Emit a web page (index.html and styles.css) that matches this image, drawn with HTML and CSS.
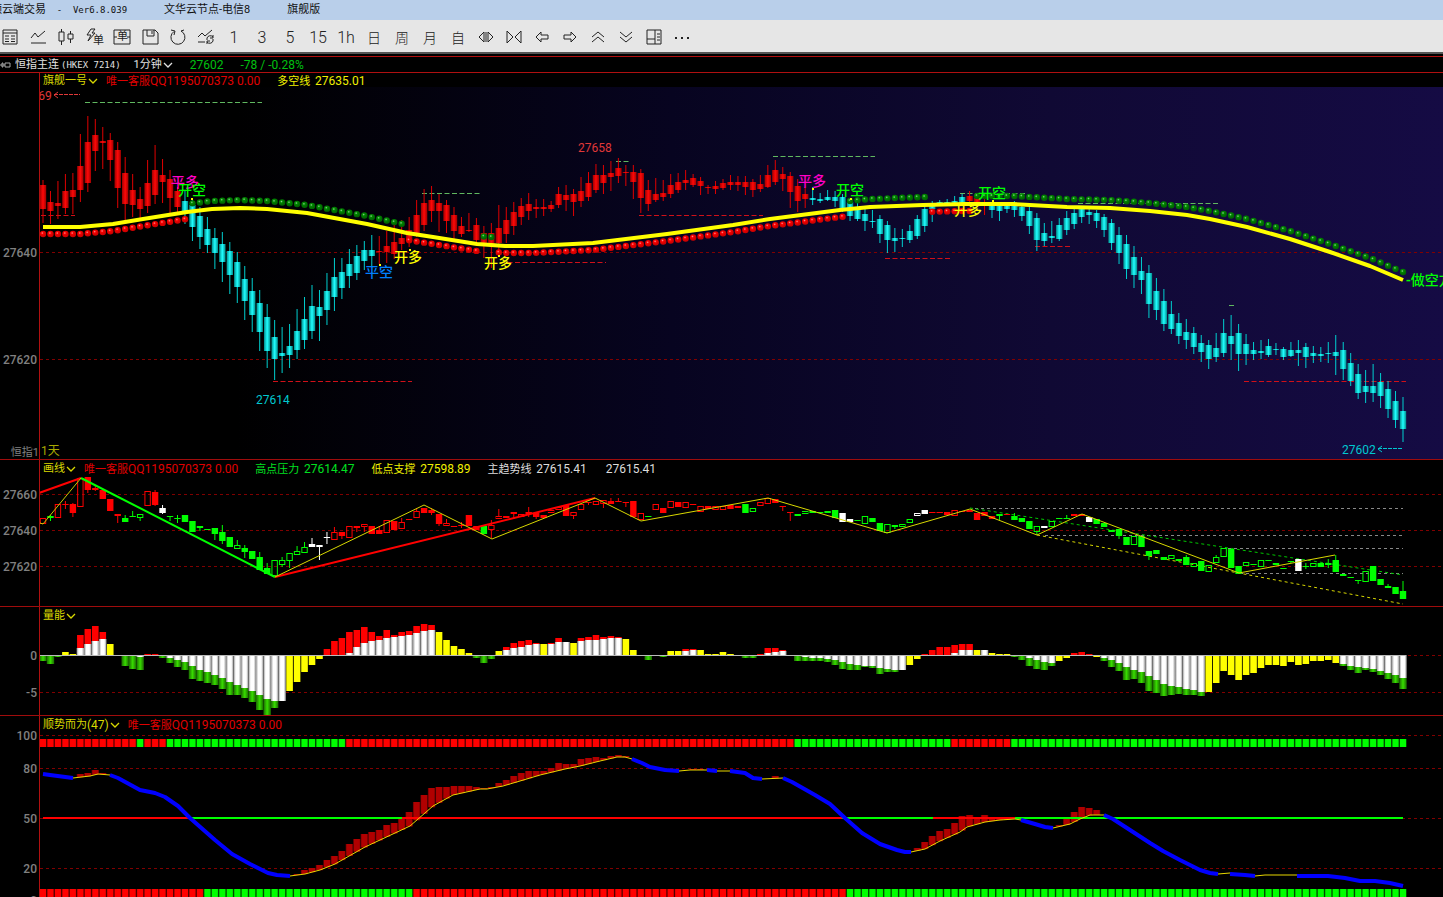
FILE: index.html
```
<!DOCTYPE html>
<html lang="zh-CN">

<head>
  <meta charset="UTF-8">
  <title>领云端交易</title>
  <link rel="stylesheet" href="styles.css">
</head>

<body>
  <header class="titlebar">
    <span class="app">领云端交易 <i>-</i> <i>Ver6.8.039</i></span>
    <span class="node">文华云节点-电信8</span>
    <span>旗舰版</span>
  </header>

  <nav class="toolbar">
    <button aria-label="报价"><svg viewBox="0 0 18 18"><path d="M2 2h14v14H2zM2 5h14M4 8h4M10 8h4M4 11h4M10 11h4M4 13.5h4M10 13.5h4"/></svg></button>
    <button aria-label="分时"><svg viewBox="0 0 18 18"><path d="M2 10l4-5 3 4 7-6M2 15h15"/></svg></button>
    <button aria-label="K线"><svg viewBox="0 0 18 18"><path d="M2 4h5v9H2zM4.500 1v3M4.500 13v4M11 6h5v5h-5zM13.500 3v3M13.500 11v4"/></svg></button>
    <button aria-label="闪电下单"><svg viewBox="0 0 18 18"><path d="M6 1L2 7h4l-3 6M6 1h4L7 5h3L3 13"/></svg><span class="sub">单</span></button>
    <button aria-label="下单"><svg viewBox="0 0 18 18"><path d="M1 2h16v14H1zM1 9h3M14 9h3"/></svg><span class="mid">单</span></button>
    <button aria-label="保存"><svg viewBox="0 0 18 18"><path d="M2 2h12l3 3v11H2zM6 2v6h7V2M11 3v3"/></svg></button>
    <button aria-label="刷新"><svg viewBox="0 0 18 18"><path d="M5 3.500a7 7 0 1 0 7-.5M2 2l4 1-1 4M12 3l3-1"/></svg></button>
    <button aria-label="切换"><svg viewBox="0 0 18 18"><path d="M1 9l4-4 3 3 7-6M1 14h7M16 9a3.500 3.500 0 0 0-6 1v2M10 14a3.500 3.500 0 0 0 6-1v-2M16 7v3h-3M10 16v-3h3"/></svg></button>
    <button>1</button>
    <button>3</button>
    <button>5</button>
    <button>15</button>
    <button>1h</button>
    <button class="zh">日</button>
    <button class="zh">周</button>
    <button class="zh">月</button>
    <button class="zh">自</button>
    <button aria-label="放大"><svg viewBox="0 0 18 18"><path d="M7 4L2 9l5 5zM11 4l5 5-5 5zM9 4v10"/></svg></button>
    <button aria-label="缩小"><svg viewBox="0 0 18 18"><path d="M2 3v12l6-6zM16 3v12l-6-6z"/></svg></button>
    <button aria-label="左移"><svg viewBox="0 0 18 18"><path d="M3 9l5-5v3h7v4H8v3z"/></svg></button>
    <button aria-label="右移"><svg viewBox="0 0 18 18"><path d="M15 9l-5-5v3H3v4h7v3z"/></svg></button>
    <button aria-label="上翻"><svg viewBox="0 0 18 18"><path d="M3 9l6-5 6 5M3 14l6-5 6 5"/></svg></button>
    <button aria-label="下翻"><svg viewBox="0 0 18 18"><path d="M3 4l6 5 6-5M3 9l6 5 6-5"/></svg></button>
    <button aria-label="布局"><svg viewBox="0 0 18 18"><path d="M2 2h14v14H2zM10 2v14M2 11h8M12 6h3M12 9h3M12 12h3"/></svg></button>
    <button aria-label="更多"><svg viewBox="0 0 18 18"><path class="dots" d="M2 10h2M8 10h2M14 10h2"/></svg></button>
  </nav>

  <section class="quote">
    <svg class="link" viewBox="0 0 11 8"><path d="M0 4h2M2 2h1v4H2zM3 4h2M5 2h5v4H5z"/></svg>
    <span class="contract">恒指主连<i>(HKEX 7214)</i></span>
    <button class="period">1分钟<svg viewBox="0 0 10 6"><path d="M1 1l4 4 4-4"/></svg></button>
    <b class="last">27602</b>
    <b>-78 / -0.28%</b>
  </section>

  <section class="panel price">
    <svg class="axis" id="price-axis"></svg>
    <div class="plot">
      <div class="legend">
        <button>旗舰一号<svg viewBox="0 0 10 6"><path d="M1 1l4 4 4-4"/></svg></button>
        <span class="red">唯一客服<b>QQ1195070373 0.00</b></span>
        <span class="yellow">多空线 <b>27635.01</b></span>
      </div>
      <svg class="chart" id="price"></svg>
    </div>
  </section>

  <section class="panel trend">
    <svg class="axis" id="trend-axis"></svg>
    <div class="plot">
      <div class="legend">
        <button>画线<svg viewBox="0 0 10 6"><path d="M1 1l4 4 4-4"/></svg></button>
        <span class="red">唯一客服<b>QQ1195070373 0.00</b></span>
        <span class="green">高点压力 <b>27614.47</b></span>
        <span class="yellow">低点支撑 <b>27598.89</b></span>
        <span class="white">主趋势线 <b>27615.41</b></span>
        <span class="white"><b>27615.41</b></span>
      </div>
      <svg class="chart" id="trend"></svg>
    </div>
  </section>

  <section class="panel energy">
    <svg class="axis" id="energy-axis"></svg>
    <div class="plot">
      <div class="legend">
        <button>量能<svg viewBox="0 0 10 6"><path d="M1 1l4 4 4-4"/></svg></button>
      </div>
      <svg class="chart" id="energy"></svg>
    </div>
  </section>

  <section class="panel follow">
    <svg class="axis" id="follow-axis"></svg>
    <div class="plot">
      <div class="legend">
        <button>顺势而为<b>(47)</b><svg viewBox="0 0 10 6"><path d="M1 1l4 4 4-4"/></svg></button>
        <span class="red">唯一客服<b>QQ1195070373 0.00</b></span>
      </div>
      <svg class="chart" id="follow"></svg>
    </div>
  </section>

  <svg class="defs">
    <defs>
      <linearGradient id="up"><stop offset="0" stop-color="#a00000"/><stop offset=".5" stop-color="#ff0808"/><stop offset="1" stop-color="#a00000"/></linearGradient>
      <linearGradient id="down"><stop offset="0" stop-color="#008c8c"/><stop offset=".5" stop-color="#20ffff"/><stop offset="1" stop-color="#008c8c"/></linearGradient>
      <linearGradient id="leaf"><stop offset="0" stop-color="#1a6a00"/><stop offset=".5" stop-color="#38dd00"/><stop offset="1" stop-color="#1a6a00"/></linearGradient>
      <linearGradient id="silver"><stop offset="0" stop-color="#999"/><stop offset=".3" stop-color="#fff"/><stop offset=".7" stop-color="#fff"/><stop offset="1" stop-color="#999"/></linearGradient>
      <radialGradient id="redball" cx=".4" cy=".35"><stop offset="0" stop-color="#ff9090"/><stop offset=".4" stop-color="#f80000"/><stop offset="1" stop-color="#d00000"/></radialGradient>
      <radialGradient id="greenball" cx=".4" cy=".35"><stop offset="0" stop-color="#90d090"/><stop offset=".4" stop-color="#008800"/><stop offset="1" stop-color="#006800"/></radialGradient>
    </defs>
  </svg>
  <script src="chart.js"></script>
</body>

</html>
```
FILE: styles.css
```
* {
  box-sizing: border-box;
}

body {
  margin: 0;
  background: #000;
  font-family: Roboto, "Noto Sans CJK SC", sans-serif;
  font-size: 11px;
  line-height: 14px;
  overflow: hidden;
}

button {
  padding: 0;
  border: 0;
  background: none;
  color: inherit;
  font: inherit;
}

svg {
  display: block;
  fill: none;
}

i {
  font-family: "DejaVu Sans Mono", monospace;
  font-size: 9px;
  font-style: normal;
}

b {
  font-size: 12px;
  font-weight: 400;
}

.titlebar {
  display: flex;
  gap: 37px;
  height: 20px;
  padding-top: 3px;
  background: #b9cfea;
  color: #111;
  white-space: pre;
}

.titlebar i {
  margin-left: 4px;
}

.titlebar .app {
  margin-left: -9px;
  word-spacing: 4px;
}

.toolbar {
  display: flex;
  align-items: center;
  height: 34px;
  padding-top: 1px;
  background: #e6e6e6;
  border-bottom: 2px solid #555;
  overflow: hidden;
}

.toolbar button {
  position: relative;
  flex: none;
  width: 28px;
  height: 28px;
  color: #222;
  font-size: 16px;
  font-weight: 300;
  line-height: 30px;
}

.toolbar button:first-child {
  margin-left: -4px;
}

.toolbar .zh {
  font-size: 14px;
}

.toolbar svg {
  width: 18px;
  height: 18px;
  margin: 0 auto;
  stroke: #222;
}

.toolbar .dots {
  stroke-width: 2;
}

.toolbar span {
  position: absolute;
  font-size: 11px;
  font-weight: 400;
  line-height: 12px;
}

.toolbar .sub {
  right: 4px;
  bottom: 4px;
}

.toolbar .mid {
  left: 9px;
  top: 8px;
}

.quote {
  display: flex;
  align-items: center;
  height: 17px;
  margin-top: 2px;
  border-top: 1px solid #b01010;
  border-bottom: 1px solid #b01010;
  color: #e0e0e0;
  white-space: nowrap;
}

.quote .link {
  width: 11px;
  height: 8px;
  margin-right: 4px;
  stroke: #aaa;
}

.quote .period,
.legend button {
  display: flex;
  align-items: center;
}

.quote i {
  margin-left: 2px;
}

.quote .period {
  margin: 0 17px 0 13px;
}

.period svg,
.legend svg {
  width: 10px;
  height: 6px;
  margin-left: 1px;
  stroke: currentColor;
  stroke-width: 1.3;
}

.quote b {
  color: #00c010;
}

.quote .last {
  margin-right: 17px;
}

.panel {
  display: grid;
  grid-template-columns: 39px 1fr;
  align-items: end;
}

.panel + .panel {
  border-top: 1px solid #a00c0c;
}

.plot {
  min-width: 0;
  border-left: 1px solid #b01010;
}

.legend {
  display: flex;
  align-items: center;
  gap: 17px;
  height: 16px;
  padding: 2px 0 0 3px;
  white-space: nowrap;
}

.price .legend {
  height: 14px;
}

.legend button {
  margin-right: -9px;
  color: #d8d800;
}

.red {
  color: #e00000;
}

.yellow {
  color: #f0f000;
}

.green {
  color: #00e020;
}

.white {
  color: #ddd;
}

.yellow b,
.green b,
.white b {
  margin-left: 2px;
}

.axis {
  width: 39px;
  overflow: visible;
}

.chart {
  width: 100%;
}

.price svg.axis,
.price .chart {
  height: 372px;
}

.price .chart {
  background: linear-gradient(90deg, #000, #000 14%, #070420 45%, #100934 72%, #150b44);
}

.trend svg.axis,
.trend .chart {
  height: 130px;
}

.energy svg.axis,
.energy .chart {
  height: 92px;
}

.follow svg.axis,
.follow .chart {
  height: 165px;
}

.axis text {
  fill: #808080;
  font-size: 12px;
  font-weight: 500;
  text-anchor: end;
}

.axis .code {
  font-size: 11px;
  font-weight: 400;
}

.chart text {
  font-size: 12px;
}

.chart .signal {
  font-size: 14px;
  font-weight: 500;
}

.grid {
  stroke: #800000;
  stroke-dasharray: 3 3;
}

.level {
  stroke-dasharray: 5 2.5;
}

.defs {
  position: absolute;
  width: 0;
  height: 0;
}
```
FILE: chart.js
```
// 每根K线的间距
const STEP = 1360 / 182;
const cx = i => 43 + STEP * i;

function rect(x, y, w, h, fill, stroke) {
  return `<rect x="${x}" y="${y}" width="${w}" height="${h}" fill="${fill}"${stroke ? ` stroke="${stroke}"` : ''}/>`;
}

function line(x1, y1, x2, y2, color, width) {
  return `<line x1="${x1}" y1="${y1}" x2="${x2}" y2="${y2}" stroke="${color}" stroke-width="${width || 1}"/>`;
}

function level(x1, x2, y, color) {
  return `<line class="level" x1="${x1}" y1="${y}" x2="${x2}" y2="${y}" stroke="${color}"/>`;
}

function poly(points, color, width) {
  return `<polyline points="${points.join(' ')}" stroke="${color}" stroke-width="${width}" stroke-linejoin="round"/>`;
}

function text(x, y, s, color, cls) {
  return `<text x="${x}" y="${y}" fill="${color}"${cls ? ` class="${cls}"` : ''}>${s}</text>`;
}

function grid(ys) {
  return ys.map(y => `<line class="grid" x1="40" x2="200%" y1="${y}" y2="${y}"/>`).join('');
}

// top: 图表区域的上边
function draw(id, top, html, labels) {
  document.getElementById(id).innerHTML = `<g transform="translate(-40 ${-top})">${html}</g>`;
  document.getElementById(id + '-axis').innerHTML = labels
    .map(l => `<text x="37" y="${l[0] - top + 5}">${l[1]}</text>`).join('');
}

function valueAt(points, x) {
  let k = 1;
  while (k < points.length - 1 && points[k][0] < x) k++;
  const [a, b] = [points[k - 1], points[k]];
  return a[1] + (b[1] - a[1]) * (x - a[0]) / (b[0] - a[0]);
}

// ---------- 主图 ----------
// 高 低 实体上 实体下
const bars = `180 223 185 209,191 224 202 211,181 219 203 206,174 214 191 208,173 214 190 197,134 202 166 190,116 192 142 183,119 171 135 151,127 169 141 143,133 181 140 160,
142 208 150 188,157 220 173 204,174 217 190 205,187 219 199 209,160 213 183 206,145 204 170 195,159 203 175 182,170 214 179 198,187 212 191 207,191 224 201 211,
199 241 205 227,207 249 216 237,217 253 229 245,228 269 238 253,232 282 244 262,242 294 251 275,252 303 262 287,266 320 279 301,278 332 291 315,290 351 303 332,
304 368 317 351,320 380 337 359,327 373 353 356,324 368 346 355,309 359 331 350,297 349 319 340,285 339 306 331,290 341 307 316,273 325 291 310,258 311 277 297,
258 299 272 288,249 288 264 276,245 280 256 273,241 270 250 261,235 267 250 256,236 264 251 252,231 263 246 252,223 259 242 254,220 250 238 244,217 247 230 240,
200 237 215 233,189 231 203 225,186 222 200 211,194 232 203 211,200 233 205 221,207 240 215 231,217 237 226 234,213 232 230 231,218 245 225 240,226 258 233 245,
223 268 233 245,205 253 228 243,207 243 220 234,202 235 212 226,198 225 206 217,193 220 204 211,199 218 207 209,199 216 207 209,201 212 205 209,187 208 194 205,
185 211 195 200,189 216 194 202,177 207 191 201,172 201 183 197,164 193 175 190,165 194 175 183,161 191 173 177,158 183 168 176,165 186 172 173,165 199 172 182,
169 213 173 198,180 211 190 204,178 202 194 200,180 201 193 197,174 198 185 194,173 193 182 190,170 190 180 183,174 187 178 185,177 195 181 186,185 194 187 188,
181 194 186 189,179 190 183 188,175 190 182 185,176 191 182 185,176 195 182 187,179 197 182 190,175 192 184 189,165 188 175 187,160 185 170 182,167 191 174 179,
172 208 176 192,179 212 186 201,187 208 194 199,187 205 198 200,193 203 199 201,190 201 197 200,191 207 197 201,194 212 197 209,198 221 202 216,203 221 208 219,
209 231 214 221,210 228 221 222,215 243 219 234,221 253 225 240,228 252 238 241,229 247 238 239,225 243 231 240,215 239 219 236,207 232 209 226,201 222 204 209,
200 206 202 204,199 205 202 203,196 206 201 203,194 205 197 203,191 203 196 201,195 204 198 203,199 215 202 206,202 218 205 210,204 221 206 211,204 213 206 209,
201 217 206 210,204 221 207 216,207 234 211 226,213 251 218 240,223 246 233 241,221 243 236 238,218 241 225 239,211 235 218 230,209 229 213 224,206 223 209 217,
207 224 212 215,210 228 213 221,214 237 217 230,219 250 223 243,227 264 235 253,235 279 244 269,246 288 257 275,257 294 271 280,265 318 273 304,278 320 291 310,
289 331 301 324,301 334 314 329,313 344 323 336,319 349 332 340,327 354 333 347,335 362 343 352,340 369 345 359,333 362 348 357,319 357 333 353,315 360 336 344,
324 371 333 354,334 365 344 354,342 360 350 354,340 359 351 353,339 357 346 355,343 355 349 350,347 360 349 357,342 357 350 356,340 366 350 353,343 368 347 357,
346 363 353 356,347 362 354 356,342 363 353 354,335 375 352 356,342 380 350 369,353 386 363 381,364 399 374 393,370 403 386 392,364 402 386 393,373 408 382 396,
381 418 389 409,391 428 401 420,397 442 411 429`.split(',').map(s => s.trim().split(' ').map(Number));

const isUp = i => i < 19 || (i > 44 && i < 103) || (i > 123 && i < 127);

// 多空线
const ma = [[43, 227], [80, 227], [113, 224], [143, 219], [187, 212], [212, 209], [240, 208], [267, 209], [307, 213], [367, 224], [407, 233],
  [433, 237], [477, 244], [505, 246], [533, 246], [593, 243], [667, 234], [733, 225], [770, 219], [840, 210], [870, 207], [923, 205], [965, 204], [1013, 204], [1067, 207],
  [1110, 208], [1150, 211], [1187, 215], [1210, 219], [1247, 227], [1290, 239], [1330, 252], [1370, 266], [1403, 280]];

const greenBall = i => (i > 19 && i < 49) || i === 59 || i === 60 || (i > 107 && i < 119) || i > 124;

let out = grid([252.5, 359.5]);
[[85, 262, 103], [422, 480, 194], [616, 629, 162], [773, 875, 157], [960, 1025, 194], [1078, 1219, 204], [1229, 1234, 306]]
  .forEach(l => out += level(l[0], l[1], l[2] - .5, '#60b860'));
[[41, 75, 215], [273, 412, 381], [500, 606, 262], [639, 763, 215], [885, 950, 258], [1035, 1070, 246], [1244, 1406, 381]]
  .forEach(l => out += level(l[0], l[1], l[2] + .5, '#d01018'));

bars.forEach((b, i) => {
  const up = isUp(i);
  out += line(cx(i), b[0], cx(i), b[1], up ? '#e00000' : '#00d0d0');
  out += rect(cx(i) - 3.2, b[2], 6.4, Math.max(b[3] - b[2], 1), up ? 'url(#up)' : 'url(#down)');
});
out += poly(ma, '#ff0', 4);
bars.forEach((b, i) => {
  const g = greenBall(i);
  out += `<circle cx="${cx(i)}" cy="${valueAt(ma, cx(i)) + (g ? -8 : 7)}" r="3.2" fill="url(#${g ? 'greenball' : 'redball'})"/>`;
});

// 买卖信号
[[171, 187, '平多', '#ff00c8'], [178, 195, '开空', '#00ff00'], [365, 277, '平空', '#0080ff'], [394, 262, '开多', '#ffff00'],
  [484, 268, '开多', '#ffff00'], [798, 186, '平多', '#ff00c8'], [836, 195, '开空', '#00ff00'], [954, 215, '开多', '#ffff00'],
  [978, 198, '开空', '#00ff00'], [1406, 285, '-做空方', '#00ff00']]
  .forEach(s => out += text(s[0], s[1], s[2], s[3], 'signal'));

out += text(578, 152, '27658', '#e03838') + text(256, 404, '27614', '#00c8d0') + text(1342, 454, '27602', '#00c8d0');
out += text(18, 100, '27669', '#e03838') + text(41, 455, '1天', '#a8a800');
out += `<path d="M58 92l-4 3 4 3" stroke="#e03838"/><path d="M54 94.500h26" stroke="#e03838" stroke-dasharray="4 1"/>`;
out += `<path d="M1382 446l-4 3 4 3" stroke="#00c8d0"/><path d="M1378 448.500h25" stroke="#00c8d0" stroke-dasharray="4 1"/>`;
[[191, 198], [379, 264], [409, 249], [498, 255], [812, 188], [850, 198], [969, 202], [992, 200]]
  .forEach(p => out += rect(p[0], p[1], 2, 2, '#ff0'));
draw('price', 87, out, [[252, '27640'], [359, '27620']]);
document.getElementById('price-axis').innerHTML += '<text class="code" x="39" y="369">恒指1</text>';

// ---------- 画线 ----------
// 类型(大写为空心) 实体上 实体下 [高 低]
const trend = `R 518 524,g 516 518 515 521,R 504 518,r 504 505 501 509,r 504 513 503 517,R 478 507,r 477 490 477 493,r 488 490 486 491,r 490 499,r 499 511,
r 514 516 514 523,g 518 522 515 522,g 516 517 511 517,G 514 518 514 521,R 491 506,r 492 505 490 506,w 508 513 505 514,g 516 517 516 521,g 518 519 515 523,g 515 522,
g 521 532,G 526 528 526 531,g 529 530,g 528 534 528 540,g 532 541 525 544,g 537 547,G 545 549 540 549,g 548 552 545 558,g 551 559,g 557 570 552 570,
g 568 574 563 574,G 560 576,G 560 565 557 567,G 553 561 553 568,G 551 555 546 555,G 547 553 542 553,w 544 547 538 547,W 545 547 545 560,w 537 538 532 544,R 532 540 527 540,
r 532 536 532 539,R 526 538,r 526 528 526 532,R 524 527 524 532,r 526 534,r 530 534 526 534,R 520 533,r 521 530,R 522 529 518 529,r 519 520,
R 511 518 508 518,r 508 513,r 510 513 508 515,r 514 524 514 526,R 523 526 519 526,r 526 527,r 525 526 522 528,r 515 526,r 526 530,g 526 534,
R 525 530 520 538,R 516 519 509 519,R 516 518,r 512 514 512 519,R 514 517,r 512 514 507 517,r 513 517 513 519,r 515 518,R 510 513,R 507 510,
r 505 516,R 512 516 512 519,R 504 510,r 502 503 502 505,R 501 505,R 500 504 500 508,r 501 504 498 504,r 501 502 498 502,r 502 503 502 507,r 501 517,
R 513 520,g 516 517,R 504 510,r 508 513,R 501 508,r 502 507,R 502 508,r 504 505,R 506 512,r 506 509,
R 506 510,R 506 510,r 505 509,r 506 508,g 504 513,G 508 512,R 502 506,R 498 504,r 499 503,r 506 507 506 511,
r 512 513 512 521,g 514 516,G 511 514,G 511 513,g 512 513,g 511 513,g 510 518,w 513 522,w 519 522,g 520 521,
G 516 524,g 518 522,g 523 531,G 524 533,g 525 527 525 529,G 524 527,G 519 523,W 513 516,w 510 514,r 512 513,
r 512 513,r 512 515,R 510 516,r 511 512,R 510 512,r 513 520,r 512 516,r 516 519,g 514 516 514 520,r 514 515,
g 516 520 513 520,g 518 522,g 521 529,G 526 532 526 535,W 526 527,G 521 527,g 518 519,g 518 519 515 519,r 514 516,r 514 516,
w 517 522,g 519 524,g 523 527,g 530 532,g 529 536 529 539,g 537 545,G 536 545,g 536 547,g 551 556 551 560,g 550 554,
g 557 560,G 555 559,G 559 561,g 557 565 555 565,G 563 567,g 561 571,G 565 572,G 557 563 555 563,G 548 557,g 549 568,
g 566 574,G 562 566,g 564 565,G 560 567,g 560 561,g 563 565,g 568 569,g 561 562 561 563,w 559 571,g 566 567 563 569,
G 563 567,g 563 567,g 563 565 559 568,g 560 572 555 572,G 574 576,g 577 578,g 580 581 580 584,G 571 582,g 566 581,g 579 585,
g 586 588 584 588,g 587 594,g 591 599 581 599`.split(',').map(s => s.trim().split(' '));

const colors = { r: '#ff0000', g: '#00ff00', w: '#ffffff' };

out = grid([494.5, 530.5, 566.5]);
[[975, 508.5], [1045, 535.5], [1228, 548.5], [1240, 573.5]].forEach(l =>
  out += `<line x1="${l[0]}" x2="1403" y1="${l[1]}" y2="${l[1]}" stroke="#888" stroke-dasharray="3 3"/>`);
out += '<path d="M970 508L1403 575" stroke="#00c800" stroke-dasharray="3 3"/><path d="M1037 535L1403 604" stroke="#d8d800" stroke-dasharray="3 3"/>';
trend.forEach((t, i) => {
  const type = t[0].toLowerCase();
  const color = colors[type];
  const [a, b, hi, lo] = t.slice(1).map(Number);
  if (hi) {
    if (hi < a) out += line(cx(i), hi, cx(i), a, color);
    if (lo > b) out += line(cx(i), b, cx(i), lo, color);
  }
  if (t[0] === type) out += rect(cx(i) - 3.2, a, 6.4, b - a, color);
  else out += rect(cx(i) - 2.7, a + .5, 5.4, Math.max(b - a - 1, 1), 'none', color);
});
out += poly([[39, 493], [81, 478]], '#f00', 2) + poly([[81, 478], [275, 577]], '#0f0', 2) + poly([[275, 577], [595, 498]], '#f00', 2);
out += poly([[40, 523], [43, 524], [81, 478]], '#c8c800', 1);
out += poly([[275, 577], [424, 505], [492, 539], [595, 498], [641, 521], [768, 498], [887, 533], [970, 509], [1037, 535], [1082, 514], [1239, 573], [1335, 555]], '#d8d800', 1);
draw('trend', 476, out, [[494, '27660'], [530, '27640'], [566, '27620']]);

// ---------- 量能 ----------
// 颜色+柱高/白柱高
const energy = `g-6 g-9 g-2 y3 y1 r20/7 r26/11 r29/14 r23/16 y11 g-1 g-11 g-14 g-15/-2 r1 r1 g-3/-1 g-8/-3 g-12/-5 g-15/-7
g-24/-11 g-26/-15 g-28/-17 g-30/-20 g-34/-23 g-40/-27 g-40/-30 g-43/-33 g-47/-36 g-55/-40 g-60/-44 g-53/-46 g-46/-46 y-36 y-27 y-17 y-10 y-4 r6 r14
r17 r23/2 r25/8 r28/12 r23/14 r19/15 r25/17 r20/18 r23/19 r24/20 r29/22 r31/24 r30/25 y23 y15 y9 y6 y2 g-3 g-8
g-4 y4 r8/5 r12/7 r14/8 r15/10 r12/11 y11 r12/11 r17/13 r13/13 y12 r17/14 r18/15 r20/15 r18/16 r19/17 r18/17 y16 y5
g-1 g-5 g-1 g-2 y4 y4 r6/4 r6/5 y5 y1 y1 y3 y1 g-1 g-3 g-3/-1 r1 r7/2 r7/3 r5/4
g-1 g-6 g-6/-2 g-6/-3 g-6/-3 g-7/-4 g-10/-5 g-14/-7 g-15/-9 g-15/-10 g-12/-11 g-13/-11 g-19/-13 g-17/-14 g-17/-15 g-15/-15 y-10 y-4 r1 r5
r8 r8 r10/2 r11/5 r11/5 y5 r5/5 y2 y1 y1 g-2 g-5 g-11/-3 g-14/-5 g-15/-7 g-11/-8 y-6 y-3 r2 r3
r1 y-2 g-6/-3 g-12/-5 g-16/-8 g-25/-12 g-24/-15 g-28/-17 g-36/-21 g-38/-25 g-41/-29 g-40/-31 g-39/-32 g-40/-34 g-40/-35 g-41/-37 y-37 y-28 y-16 y-20
y-25 y-20 y-18 y-13 y-10 y-10 y-11 y-7 y-10 y-9 y-6 y-6 y-5 y-8 g-11/-9 g-15/-11 g-18/-12 g-15/-13 g-17/-14 g-20/-16
g-24/-18 g-28/-20 g-34/-23`.split(/\s+/);

// 从 from 画到 to
function column(i, from, to, fill, w) {
  return rect(cx(i) - w / 2, 655 - Math.max(from, to), w, Math.abs(to - from), fill);
}

out = grid([655.5, 692.5]);
energy.forEach((e, i) => {
  const [v, white = 0] = e.slice(1).split('/').map(Number);
  out += column(i, white, v, { g: 'url(#leaf)', y: '#ff0', r: '#f00' }[e[0]], e[0] === 'g' ? 7.4 : 6.6);
  if (white) out += column(i, 0, white, 'url(#silver)', 7.4);
});
out += line(40, 655.5, 1406, 655.5, '#bbb');
draw('energy', 623, out, [[655, '0'], [692, '-5']]);

// ---------- 顺势而为 ----------
// b 蓝色粗线 y 黄色细线
const curve = [
  ['b', [43, 774], [50, 775], [73, 778]],
  ['y', [73, 778], [90, 776], [98, 774], [110, 775]],
  ['b', [110, 775], [118, 778], [140, 790], [155, 793], [165, 797], [178, 806], [190, 818], [215, 840], [232, 854], [250, 864], [268, 873], [277, 875], [290, 876]],
  ['y', [290, 876], [305, 874], [320, 870], [335, 864], [365, 847], [410, 826], [433, 806], [453, 795], [480, 789], [487, 789], [503, 786], [520, 781], [540, 775], [565, 769], [580, 766], [600, 761], [617, 757], [625, 757], [632, 759]],
  ['b', [632, 759], [642, 763], [650, 767], [665, 770], [679, 771]],
  ['y', [679, 771], [690, 770], [707, 770]],
  ['b', [707, 770], [717, 771]],
  ['y', [717, 771], [730, 771]],
  ['b', [730, 771], [745, 773], [753, 778], [762, 779]],
  ['y', [762, 779], [783, 778]],
  ['b', [783, 778], [792, 782], [815, 795], [830, 804], [845, 818], [862, 833], [880, 844], [897, 850], [905, 852], [911, 852]],
  ['y', [911, 852], [925, 849], [940, 841], [960, 832], [967, 827], [985, 822], [1000, 820], [1015, 819], [1021, 820]],
  ['b', [1021, 820], [1035, 824], [1045, 827], [1053, 828]],
  ['y', [1053, 828], [1070, 824], [1080, 819], [1090, 815], [1104, 815]],
  ['b', [1104, 815], [1113, 819], [1130, 830], [1150, 843], [1163, 851], [1180, 860], [1200, 870], [1210, 873], [1218, 874]],
  ['y', [1218, 874], [1230, 873]],
  ['b', [1230, 874], [1245, 875], [1255, 876]],
  ['y', [1255, 876], [1265, 875], [1297, 875]],
  ['b', [1297, 876], [1328, 876], [1345, 878], [1360, 881], [1375, 881], [1390, 883], [1403, 886]]
];
const curvePoints = curve.flatMap(c => c.slice(1)).filter((p, k, all) => !k || p[0] > all[k - 1][0]);

// 起始序号: 柱顶
const tops = {
  5: [774, 773, 770, 773],
  34: [874, 870, 868, 865, 860, 856, 851, 844, 839, 834, 832, 830, 825, 823, 819, 812, 802, 795, 788, 787, 787, 786, 786, 786, 787, 788, 787,
    783, 780, 776, 773, 771, 771, 771, 768, 763, 764, 764, 759, 758, 757, 758, 756, 755, 756],
  87: [769, 769],
  98: [776],
  117: [848, 842, 836, 831, 829, 823, 816, 815, 817, 815, 817, 817, 817, 818],
  136: [825, 819, 812, 807, 808, 810]
};

// [颜色, 结束序号]
const stripTop = [['r', 12], ['g', 13], ['r', 16], ['g', 40], ['r', 100], ['g', 121], ['r', 129], ['g', 182]];
const stripBottom = [['r', 21], ['g', 49], ['r', 107], ['g', 182]];

function strip(list, y) {
  let s = '';
  let i = 0;
  list.forEach(([c, end]) => {
    for (; i <= end; i++) {
      s += rect(cx(i) - 3.7, y, 7.4, 8, c === 'r' ? '#700000' : '#006000');
      s += rect(cx(i) - 3, y, 6, 8, colors[c]);
    }
  });
  return s;
}

out = grid([735.5, 768.5, 818.5, 868.5]) + strip(stripTop, 739) + strip(stripBottom, 889);
Object.keys(tops).forEach(k => tops[k].forEach((y, n) => {
  const x = cx(Number(k) + n);
  const h = Math.max(valueAt(curvePoints, x) - y, 1);
  out += rect(x - 3.7, y, 7.4, h, '#600000') + rect(x - 3, y, 6, h, '#b00000');
}));
[[43, 190, 'r'], [190, 402, 'g'], [402, 842, 'r'], [842, 933, 'g'], [933, 1015, 'r'], [1015, 1403, 'g']]
  .forEach(l => out += line(l[0], 818, l[1], 818, colors[l[2]], 2));
curve.forEach(c => out += poly(c.slice(1), c[0] === 'b' ? '#00f' : '#e8d800', c[0] === 'b' ? 4 : 1));
draw('follow', 732, out, [[735, '100'], [768, '80'], [818, '50'], [868, '20'], [900, '0']]);
```
